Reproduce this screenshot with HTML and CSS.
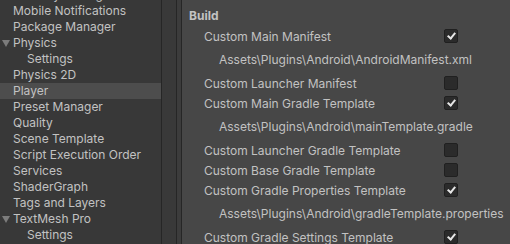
FILE: index.html
```html
<!DOCTYPE html>
<html>
<head>
<meta charset="utf-8">
<link rel="stylesheet" href="styles.css">
</head>
<body>
<div class="window">
  <div class="tree">
    <div class="tree-list">
      <div class="row">Memory Settings</div>
      <div class="row">Mobile Notifications</div>
      <div class="row">Package Manager</div>
      <div class="row parent"><span class="tri"></span>Physics</div>
      <div class="row child">Settings</div>
      <div class="row">Physics 2D</div>
      <div class="row selected">Player</div>
      <div class="row">Preset Manager</div>
      <div class="row">Quality</div>
      <div class="row">Scene Template</div>
      <div class="row">Script Execution Order</div>
      <div class="row">Services</div>
      <div class="row">ShaderGraph</div>
      <div class="row">Tags and Layers</div>
      <div class="row parent"><span class="tri"></span>TextMesh Pro</div>
      <div class="row child">Settings</div>
    </div>
  </div>
  <div class="strip-a"></div>
  <div class="strip-b"></div>
  <div class="inspector">
    <div class="section">Build</div>
    <div class="field"><span class="label">Custom Main Manifest</span><span class="check on"></span></div>
    <div class="path">Assets\Plugins\Android\AndroidManifest.xml</div>
    <div class="field"><span class="label">Custom Launcher Manifest</span><span class="check"></span></div>
    <div class="field"><span class="label">Custom Main Gradle Template</span><span class="check on"></span></div>
    <div class="path">Assets\Plugins\Android\mainTemplate.gradle</div>
    <div class="field"><span class="label">Custom Launcher Gradle Template</span><span class="check"></span></div>
    <div class="field"><span class="label">Custom Base Gradle Template</span><span class="check"></span></div>
    <div class="field"><span class="label">Custom Gradle Properties Template</span><span class="check on"></span></div>
    <div class="path">Assets\Plugins\Android\gradleTemplate.properties</div>
    <div class="field"><span class="label">Custom Gradle Settings Template</span><span class="check on"></span></div>
  </div>
</div>
</body>
</html>
```
FILE: styles.css
```css
html, body {
  margin: 0;
  padding: 0;
  background: #383838;
  overflow: hidden;
}
body {
  font-family: Inter, "Noto Sans", sans-serif;
  font-size: 12px;
  color: #c2c2c2;
}
.window {
  display: flex;
  height: 244px;
  width: 510px;
  overflow: hidden;
}
.tree {
  width: 161px;
  flex: none;
  background: #383838;
  border-right: 1px solid #262626;
  overflow: hidden;
}
.tree-list {
  margin-top: -13px;
}
.row {
  height: 16px;
  line-height: 16px;
  padding-left: 13px;
  white-space: nowrap;
  position: relative;
}
.row.child {
  padding-left: 27px;
}
.row.selected {
  background: #4d4d4d;
}
.tri {
  position: absolute;
  left: 2px;
  top: 5px;
  width: 0;
  height: 0;
  border-left: 4.5px solid transparent;
  border-right: 4.5px solid transparent;
  border-top: 7px solid #7c7c7c;
}
.strip-a {
  width: 14px;
  flex: none;
  background: #393939;
  border-right: 1px solid #262626;
}
.strip-b {
  width: 4px;
  flex: none;
  background: #3c3c3c;
  border-right: 1px solid #262626;
}
.inspector {
  flex: 1;
  background: #474747;
  padding-top: 6px;
  white-space: nowrap;
}
.section {
  height: 20px;
  line-height: 20px;
  padding-left: 7px;
  font-weight: 700;
}
.field {
  height: 20px;
  display: flex;
  align-items: center;
  padding-left: 22px;
}
.label {
  width: 240px;
  flex: none;
}
.path {
  height: 27px;
  line-height: 27px;
  padding-left: 37px;
}
.check {
  width: 12px;
  height: 12px;
  background: #2b2b2b;
  border: 1px solid #202020;
  border-radius: 2px;
  position: relative;
  flex: none;
}
.check.on::after {
  content: "";
  position: absolute;
  left: 4px;
  top: 1px;
  width: 3px;
  height: 6px;
  border-right: 2px solid #e6e6e6;
  border-bottom: 2px solid #e6e6e6;
  transform: rotate(40deg);
}
```
